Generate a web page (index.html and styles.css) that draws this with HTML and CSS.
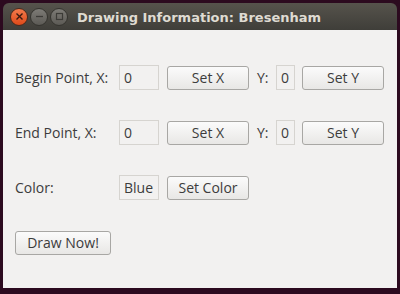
FILE: index.html
```html
<!DOCTYPE html>
<html lang="en">
<head>
    <meta charset="UTF-8">
    <title>Drawing Information: Bresenham</title>
    <link rel="stylesheet" href="styles.css">
</head>
<body>
<div class="window">
    <div class="titlebar">
        <div class="btns">
            <span class="wbtn close">
                <svg width="9" height="9" viewBox="0 0 9 9"><path d="M1.5 1.5 L7.5 7.5 M7.5 1.5 L1.5 7.5" stroke="#3a1a10" stroke-width="1.4"/></svg>
            </span>
            <span class="wbtn">
                <svg width="9" height="9" viewBox="0 0 9 9"><path d="M1 4.5 H8" stroke="#3c3b37" stroke-width="1.3"/></svg>
            </span>
            <span class="wbtn">
                <svg width="9" height="9" viewBox="0 0 9 9"><rect x="1.5" y="1.5" width="6" height="6" fill="none" stroke="#3c3b37" stroke-width="1.2"/></svg>
            </span>
        </div>
        <div class="title">Drawing Information: Bresenham</div>
    </div>
    <div class="content">
        <div class="row">
            <div class="label">Begin Point, X:</div>
            <div class="field">0</div>
            <button class="btn">Set X</button>
            <div class="ylabel">Y:</div>
            <div class="field small">0</div>
            <button class="btn last">Set Y</button>
        </div>
        <div class="row">
            <div class="label">End Point, X:</div>
            <div class="field">0</div>
            <button class="btn">Set X</button>
            <div class="ylabel">Y:</div>
            <div class="field small">0</div>
            <button class="btn last">Set Y</button>
        </div>
        <div class="row">
            <div class="label">Color:</div>
            <div class="field">Blue</div>
            <button class="btn">Set Color</button>
        </div>
        <div class="row">
            <button class="btn draw">Draw Now!</button>
        </div>
    </div>
</div>
</body>
</html>
```

FILE: styles.css
```css
*{
    margin: 0;
    padding: 0;
    box-sizing: border-box;
}
body{
    background: #2c0a1f;
    width: 400px;
    height: 294px;
    padding: 3px;
    font-family: "Open Sans", "DejaVu Sans", sans-serif;
    font-size: 14px;
    color: #3c3c3c;
}
.window{
    width: 394px;
    height: 285px;
    display: flex;
    flex-direction: column;
}
.titlebar{
    height: 27px;
    background: linear-gradient(#56534c, #3f3e39);
    border-radius: 6px 6px 0 0;
    display: flex;
    align-items: center;
    padding-left: 7px;
}
.btns{
    display: flex;
    gap: 2px;
}
.wbtn{
    width: 18px;
    height: 18px;
    border-radius: 50%;
    background: linear-gradient(#7d7b76, #5c5a55);
    border: 1px solid #35342f;
    display: flex;
    align-items: center;
    justify-content: center;
}
.wbtn.close{
    background: linear-gradient(#f37a4b, #de4a1a);
    border-color: #4a2a1c;
}
.title{
    margin-left: 9px;
    color: #dfdbd2;
    font-family: "DejaVu Sans", sans-serif;
    font-weight: bold;
    font-size: 13px;
    margin-top: 1px;
}
.content{
    flex: 1;
    background: #f2f1f0;
    padding: 35px 0 0 12px;
    display: flex;
    flex-direction: column;
    gap: 30px;
}
.row{
    display: flex;
    align-items: center;
    height: 25px;
}
.label{
    width: 104px;
}
.field{
    width: 40px;
    height: 25px;
    border: 1px solid #d6d4d0;
    background: #f2f1f0;
    padding-left: 4px;
    line-height: 23px;
}
.field.small{
    width: 19px;
}
.btn{
    width: 82px;
    height: 24px;
    margin-left: 8px;
    border: 1px solid #a8a7a4;
    border-radius: 3px;
    background: linear-gradient(#fbfbfb, #e8e7e5);
    font-family: inherit;
    font-size: 14px;
    color: #3c3c3c;
}
.btn.last{
    margin-left: 7px;
}
.ylabel{
    width: 19px;
    margin-left: 8px;
}
.btn.draw{
    width: 96px;
    margin-left: 0;
}
```
